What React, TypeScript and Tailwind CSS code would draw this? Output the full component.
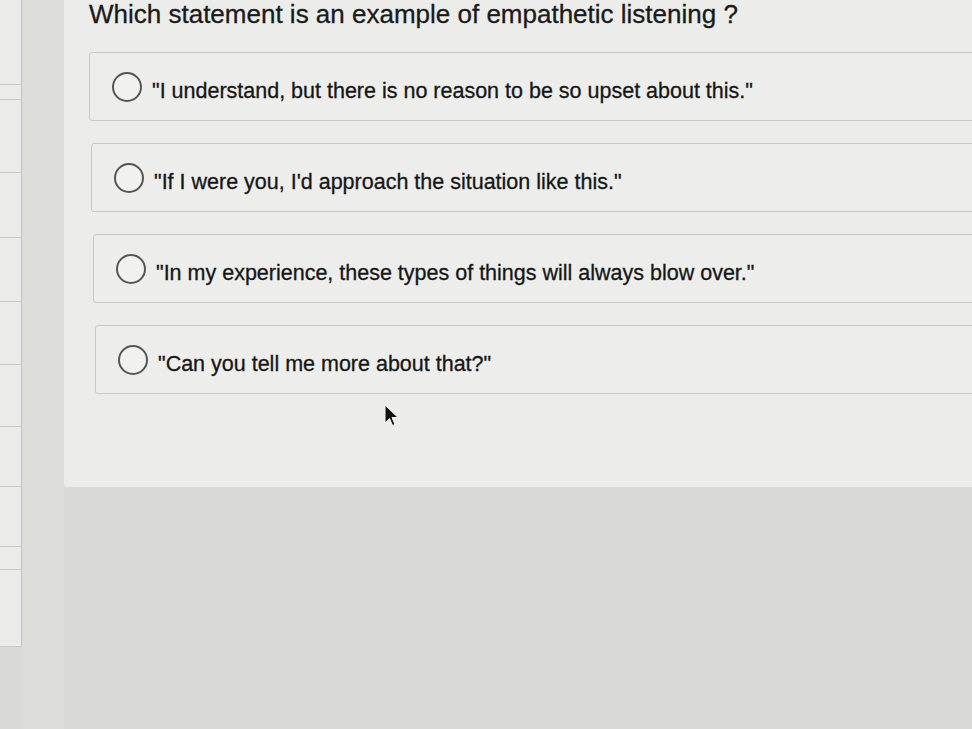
import React from "react";

const options = [
  { text: "\"I understand, but there is no reason to be so upset about this.\"", cls: "ml-[0px]" },
  { text: "\"If I were you, I'd approach the situation like this.\"", cls: "ml-[2px]" },
  { text: "\"In my experience, these types of things will always blow over.\"", cls: "ml-[4px]" },
  { text: "\"Can you tell me more about that?\"", cls: "ml-[6px]" },
];

const sideRows = [85, 15, 73, 65, 64, 63, 62, 60, 60, 23, 77];

export default function App() {
  return (
    <div
      className="relative w-[972px] h-[729px] overflow-hidden bg-[#d9d9d6] flex"
      style={{ fontFamily: '"Liberation Sans", Arial, sans-serif' }}
    >
      {/* left sidebar strip */}
      <div className="w-[22px] flex flex-col shrink-0">
        {sideRows.map((h, i) => (
          <div
            key={i}
            className="bg-[#ebebe9] border-b border-[#c9c9c6] border-r border-r-[#c4c4c1]"
            style={{ height: h }}
          />
        ))}
      </div>
      {/* gap band */}
      <div className="w-[42px] shrink-0 bg-[#dcdcd9]" />
      {/* main panel */}
      <div className="flex-1 h-[487px] bg-[#ececea] pl-[25px] flex flex-col overflow-hidden rounded-bl-[3px]">
        <h1 className="-mt-[3px] text-[26px] leading-[34px] text-[#1a1a1a] whitespace-nowrap [-webkit-text-stroke:0.3px_#1a1a1a]">
          Which statement is an example of empathetic listening ?
        </h1>
        <div className="mt-[21px] flex flex-col gap-[22px]">
          {options.map((o, i) => (
            <div
              key={i}
              className={`${o.cls} w-[1000px] h-[69px] flex items-center pl-[22px] gap-[10px] border border-[#c8c8c5] rounded-[3px] bg-[#ededeb]`}
            >
              <div className="w-[30px] h-[30px] rounded-full border-2 border-[#555555] bg-[#f1f1ef] shrink-0" />
              <span className="text-[21.5px] text-[#161616] whitespace-nowrap mt-[9px] [-webkit-text-stroke:0.3px_#161616]">
                {o.text}
              </span>
            </div>
          ))}
        </div>
      </div>
      {/* mouse cursor */}
      <svg
        className="absolute left-[384px] top-[404px]"
        width="16"
        height="24"
        viewBox="0 0 16 24"
      >
        <path
          d="M1 1 L1 19 L5.5 14.5 L8.5 21.5 L11 20.5 L8 13.5 L14 13.5 Z"
          fill="#111"
          stroke="#f5f5f5"
          strokeWidth="1"
          strokeLinejoin="round"
        />
      </svg>
    </div>
  );
}
